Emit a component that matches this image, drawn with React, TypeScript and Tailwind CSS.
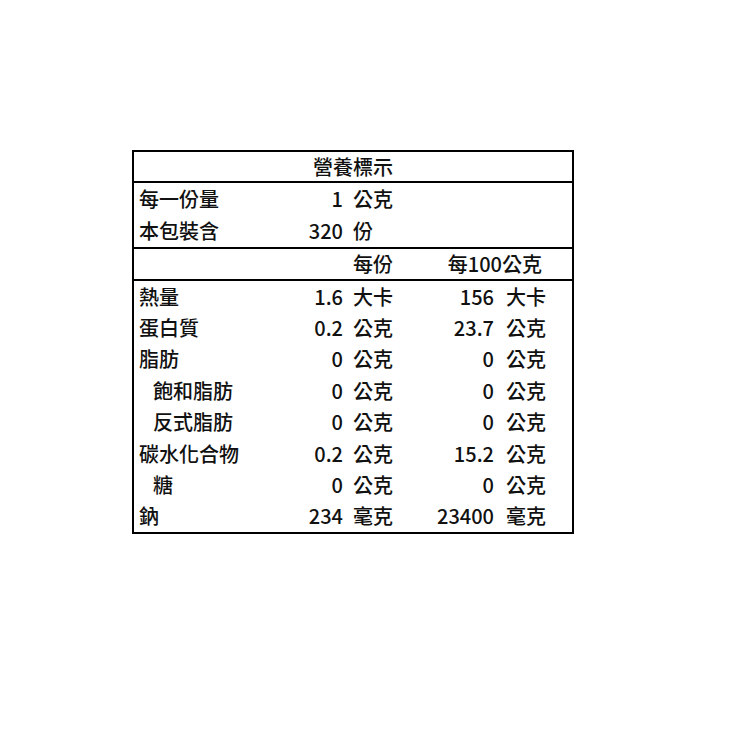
const servingRows = [
  { label: "每一份量", value: "1", unit: "公克" },
  { label: "本包裝含", value: "320", unit: "份" },
]

const nutrients = [
  { label: "熱量", v1: "1.6", u1: "大卡", v2: "156", u2: "大卡", indent: false },
  { label: "蛋白質", v1: "0.2", u1: "公克", v2: "23.7", u2: "公克", indent: false },
  { label: "脂肪", v1: "0", u1: "公克", v2: "0", u2: "公克", indent: false },
  { label: "飽和脂肪", v1: "0", u1: "公克", v2: "0", u2: "公克", indent: true },
  { label: "反式脂肪", v1: "0", u1: "公克", v2: "0", u2: "公克", indent: true },
  { label: "碳水化合物", v1: "0.2", u1: "公克", v2: "15.2", u2: "公克", indent: false },
  { label: "糖", v1: "0", u1: "公克", v2: "0", u2: "公克", indent: true },
  { label: "鈉", v1: "234", u1: "毫克", v2: "23400", u2: "毫克", indent: false },
]

const grid = "grid grid-cols-[161px_48px_85px_66px_1fr] items-center"

export default function App() {
  return (
    <div className="min-h-screen bg-white pl-[132px] pt-[150px] font-['Noto_Sans_CJK_TC','Noto_Sans',sans-serif] text-[20px] font-medium leading-none text-[#111]">
      <div className="w-[442px] border-2 border-black">
        {/* title */}
        <div className="flex h-[31px] items-center justify-center border-b-2 border-black">營養標示</div>

        {servingRows.map((r) => (
          <div key={r.label} className={`${grid} h-[32px]`}>
            <span className="pl-[5px]">{r.label}</span>
            <span className="text-right">{r.value}</span>
            <span className="pl-[10px]">{r.unit}</span>
          </div>
        ))}

        <div className={`${grid} h-[34px] border-y-2 border-black`}>
          <span />
          <span />
          <span className="pl-[10px]">每份</span>
          <span className="col-span-2 pr-[30px] text-right">每100公克</span>
        </div>

        {nutrients.map((n) => (
          <div key={n.label} className={`${grid} h-[31.4px]`}>
            <span className={n.indent ? "pl-[19px]" : "pl-[5px]"}>{n.label}</span>
            <span className="text-right">{n.v1}</span>
            <span className="pl-[10px]">{n.u1}</span>
            <span className="text-right">{n.v2}</span>
            <span className="pl-[12px]">{n.u2}</span>
          </div>
        ))}
      </div>
    </div>
  )
}
